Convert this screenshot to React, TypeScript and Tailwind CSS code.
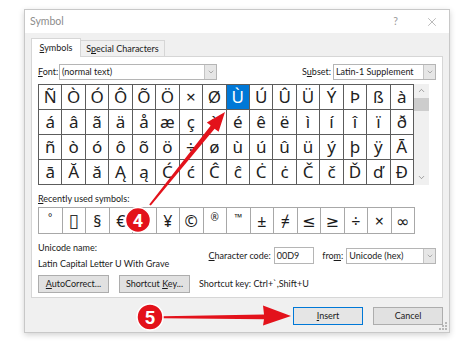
import React from 'react';
import { ChevronDown, ChevronUp, X } from 'lucide-react';

const rows = [
  ['Ñ', 'Ò', 'Ó', 'Ô', 'Õ', 'Ö', '×', 'Ø', 'Ù', 'Ú', 'Û', 'Ü', 'Ý', 'Þ', 'ß', 'à'],
  ['á', 'â', 'ã', 'ä', 'å', 'æ', 'ç', 'è', 'é', 'ê', 'ë', 'ì', 'í', 'î', 'ï', 'ð'],
  ['ñ', 'ò', 'ó', 'ô', 'õ', 'ö', '÷', 'ø', 'ù', 'ú', 'û', 'ü', 'ý', 'þ', 'ÿ', 'Ā'],
  ['ā', 'Ă', 'ă', 'Ą', 'ą', 'Ć', 'ć', 'Ĉ', 'ĉ', 'Ċ', 'ċ', 'Č', 'č', 'Ď', 'ď', 'Đ'],
];

const recent = ['°', '▯', '§', '€', '£', '¥', '©', '®', '™', '±', '≠', '≤', '≥', '÷', '×', '∞'];

// size of each recently used glyph, the small ones sit high in the cell
const recentSize = (ch: string) => {
  if (ch === '°' || ch === '®' || ch === '™') return 'text-[10px] pb-[6px]';
  if (ch === '▯') return 'text-[19px] leading-none text-[#333]';
  return 'text-[16px]';
};

// small select box with the grey drop button on the right
const Select = ({ value, width }: { value: string; width: string }) => (
  <div className={`${width} h-[16px] flex bg-white border border-[#b5b5b5]`}>
    <div className="flex-1 pl-[2px] text-[9px] leading-[14px] text-[#1a1a1a] whitespace-nowrap overflow-hidden">{value}</div>
    <div className="w-[12px] h-full bg-[#e6e6e6] border-l border-[#c4c4c4] flex items-center justify-center">
      <ChevronDown size={8} strokeWidth={1.5} className="text-[#707070]" />
    </div>
  </div>
);

const Annotations = () => (
  <svg className="absolute inset-0 pointer-events-none" width="474" height="347" viewBox="0 0 474 347">
    {/* arrow from 4 to the selected cell */}
    <polygon
      points="150.8,205.6 214.6,128.7 218.6,131.8 225,112 206.8,122.4 210.8,125.5 149.2,204.4"
      fill="#e3121b"
    />
    {/* arrow from 5 to Insert */}
    <polygon points="163,316.2 264,314.4 263,305.5 291,316 263,325.5 264,319.2 163,318.2" fill="#e3121b" />
    <circle cx="138" cy="220" r="12.5" fill="#e3121b" stroke="#ffffff" strokeWidth="1.5" />
    <text x="138" y="226.5" textAnchor="middle" fontSize="18" fontWeight="700" fill="#ffffff" fontFamily="Roboto, 'Noto Sans', sans-serif">
      4
    </text>
    <circle cx="150" cy="317" r="13" fill="#e3121b" stroke="#ffffff" strokeWidth="1.5" />
    <text x="150" y="323.5" textAnchor="middle" fontSize="19" fontWeight="700" fill="#ffffff" fontFamily="Roboto, 'Noto Sans', sans-serif">
      5
    </text>
  </svg>
);

export default function App() {
  return (
    <div className="relative w-[474px] h-[347px] bg-white overflow-hidden pt-[9px] pl-[24px] font-['Lato','Liberation_Sans',sans-serif] text-[#1a1a1a]">
      <div className="relative w-[426px] h-[324px] flex flex-col border border-[#c8c8c8] shadow-[0_2px_6px_rgba(0,0,0,0.18)]">
        {/* title bar */}
        <div className="h-[23px] bg-white flex items-center pl-[5px] pr-[10px] text-[10.5px] text-[#8c8c8c]">
          <span>Symbol</span>
          <span className="ml-auto mr-[27px] text-[10.5px] text-[#9a9a9a]">?</span>
          <X size={14} strokeWidth={1} className="text-[#8a8a8a]" />
        </div>

        <div className="flex-1 bg-[#f0f0f0] px-[6px] pt-[6px] flex flex-col">
          {/* tabs */}
          <div className="h-[18px] flex items-end relative z-10">
            <div className="w-[50px] h-[19px] bg-white border border-b-0 border-[#d6d6d6] flex items-center justify-center text-[9px]">
              <span>
                <u className="underline-offset-1">S</u>ymbols
              </span>
            </div>
            <div className="w-[84px] h-[17px] border border-l-0 border-b-0 border-[#d6d6d6] flex items-center justify-center text-[9px] whitespace-nowrap">
              <span>
                S<u className="underline-offset-1">p</u>ecial Characters
              </span>
            </div>
          </div>

          {/* tab panel */}
          <div className="w-[412px] h-[242px] -mt-px bg-white border border-[#d6d6d6] px-[6px] pt-[7px] flex flex-col">
            <div className="h-[16px] flex items-center text-[9px]">
              <span className="w-[21px]">
                <u className="underline-offset-1">F</u>ont:
              </span>
              <Select value="(normal text)" width="w-[158px]" />
              <span className="ml-auto mr-[2px]">
                S<u className="underline-offset-1">u</u>bset:
              </span>
              <Select value="Latin-1 Supplement" width="w-[103px]" />
            </div>

            {/* character grid with scrollbar */}
            <div className="mt-[4px] flex">
              <div className="w-[376px] grid grid-cols-[repeat(16,minmax(0,1fr))] border-t border-l border-[#5c5c5c] font-['Noto_Sans','DejaVu_Sans',sans-serif]">
                {rows.flat().map((ch, i) => (
                  <div
                    key={i}
                    className={`h-[25px] border-r border-b border-[#5c5c5c] flex items-center justify-center text-[17px] ${
                      i === 8 ? 'bg-[#0078d7] text-white' : 'text-[#222]'
                    }`}
                  >
                    {ch}
                  </div>
                ))}
              </div>
              <div className="w-[15px] h-[101px] bg-[#f0f0f0] flex flex-col items-center">
                <ChevronUp size={9} strokeWidth={1.5} className="mt-[2px] text-[#606060]" />
                <div className="mt-[3px] w-[15px] h-[13px] bg-[#cdcdcd]" />
                <ChevronDown size={9} strokeWidth={1.5} className="mt-auto mb-[3px] text-[#606060]" />
              </div>
            </div>

            <div className="mt-[7px] h-[14px] leading-[14px] text-[9px]">
              <u className="underline-offset-1">R</u>ecently used symbols:
            </div>
            <div className="mt-[1px] w-[377px] h-[27px] flex border border-[#a8a8a8] font-['Noto_Sans','DejaVu_Sans',sans-serif]">
              {recent.map((ch, i) => (
                <div
                  key={i}
                  className={`flex-1 flex items-center justify-center border-[#a8a8a8] ${i < 15 ? 'border-r' : ''} ${recentSize(ch)}`}
                >
                  {ch}
                </div>
              ))}
            </div>

            {/* unicode name and character code */}
            <div className="mt-[6px] flex items-center text-[9px]">
              <div className="w-[173px] flex flex-col gap-[1px]">
                <div className="h-[15px] leading-[15px]">Unicode name:</div>
                <div className="h-[15px] leading-[15px]">Latin Capital Letter U With Grave</div>
              </div>
              <span className="whitespace-nowrap">
                <u className="underline-offset-1">C</u>haracter code:
              </span>
              <div className="ml-[3px] w-[41px] h-[17px] bg-white border border-[#b5b5b5] pl-[2px] leading-[15px]">00D9</div>
              <span className="ml-[8px] mr-[3px]">
                fro<u className="underline-offset-1">m</u>:
              </span>
              <Select value="Unicode (hex)" width="w-[91px]" />
            </div>

            <div className="mt-[4px] flex items-center text-[9px] whitespace-nowrap">
              <div className="w-[71px] h-[18px] bg-[#e1e1e1] border border-[#adadad] flex items-center justify-center">
                <span>
                  <u className="underline-offset-1">A</u>utoCorrect...
                </span>
              </div>
              <div className="ml-[10px] w-[71px] h-[18px] bg-[#e1e1e1] border border-[#adadad] flex items-center justify-center">
                <span>
                  Shortcut <u className="underline-offset-1">K</u>ey...
                </span>
              </div>
              <span className="ml-[9px]">Shortcut key: Ctrl+`,Shift+U</span>
            </div>
          </div>

          {/* bottom buttons */}
          <div className="mt-[9px] w-[412px] flex justify-end gap-[10px] text-[9px]">
            <div className="w-[70px] h-[18px] bg-[#e5e5e5] border border-[#0078d7] flex items-center justify-center">
              <span>
                <u className="underline-offset-1">I</u>nsert
              </span>
            </div>
            <div className="w-[70px] h-[18px] bg-[#e1e1e1] border border-[#adadad] flex items-center justify-center">
              Cancel
            </div>
          </div>
        </div>

        {/* resize grip */}
        <svg className="absolute right-[1px] bottom-[1px]" width="10" height="10" viewBox="0 0 10 10">
          <rect x="7" y="1" width="2" height="2" fill="#b8b8b8" />
          <rect x="4" y="4" width="2" height="2" fill="#b8b8b8" />
          <rect x="7" y="4" width="2" height="2" fill="#b8b8b8" />
          <rect x="1" y="7" width="2" height="2" fill="#b8b8b8" />
          <rect x="4" y="7" width="2" height="2" fill="#b8b8b8" />
          <rect x="7" y="7" width="2" height="2" fill="#b8b8b8" />
        </svg>
      </div>
      <Annotations />
    </div>
  );
}
